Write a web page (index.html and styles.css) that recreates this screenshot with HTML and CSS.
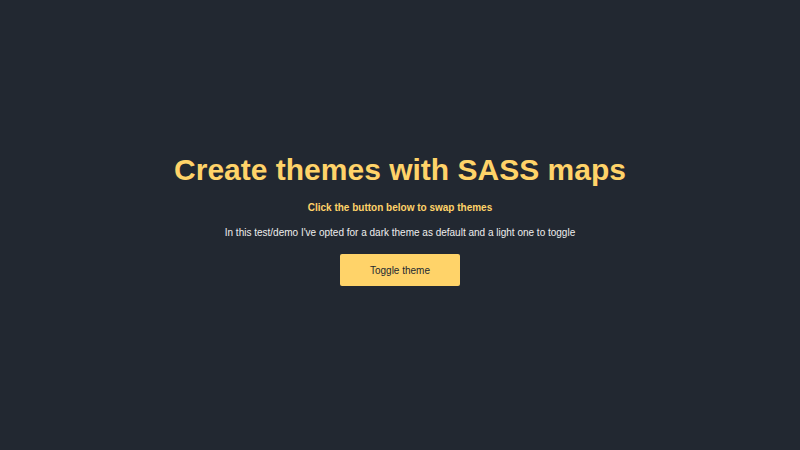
FILE: index.html
```html
<!DOCTYPE html>
<html lang="en">
<head>
    <meta charset="UTF-8">
    <meta name="viewport" content="width=device-width, initial-scale=1.0">
    <title>SASS map themes</title>
    <link rel="stylesheet" href="styles.css">
</head>
<body class="theme-dark">
    <main class="wrapper">
        <h1 class="title">Create themes with SASS maps</h1>
        <h4 class="subtitle">Click the button below to swap themes</h4>
        <p class="intro">In this test/demo I've opted for a dark theme as default and a light one to toggle</p>
        <button class="toggle" type="button">Toggle theme</button>
    </main>
</body>
</html>
```

FILE: styles.css
```css
* {
    margin: 0;
    padding: 0;
    box-sizing: border-box;
}

body {
    font-family: 'Liberation Sans', Arial, sans-serif;
    min-height: 100vh;
    display: flex;
    justify-content: center;
    align-items: center;
}

/* dark theme is the default */
.theme-dark {
    background-color: #222831;
    color: #eeeeee;
}

.wrapper {
    display: flex;
    flex-direction: column;
    align-items: center;
    text-align: center;
    padding-bottom: 11px;
}

.title {
    font-size: 30px;
    font-weight: 700;
    color: #ffd369;
    line-height: 34px;
}

.subtitle {
    font-size: 10px;
    font-weight: 700;
    color: #ffd369;
    line-height: 12px;
    margin-top: 15px;
}

.intro {
    font-size: 10px;
    line-height: 12px;
    margin-top: 13px;
}

.toggle {
    margin-top: 15px;
    width: 120px;
    height: 32px;
    border: none;
    border-radius: 2px;
    background-color: #ffd369;
    color: #222831;
    font-family: inherit;
    font-size: 10px;
    cursor: pointer;
}
```
